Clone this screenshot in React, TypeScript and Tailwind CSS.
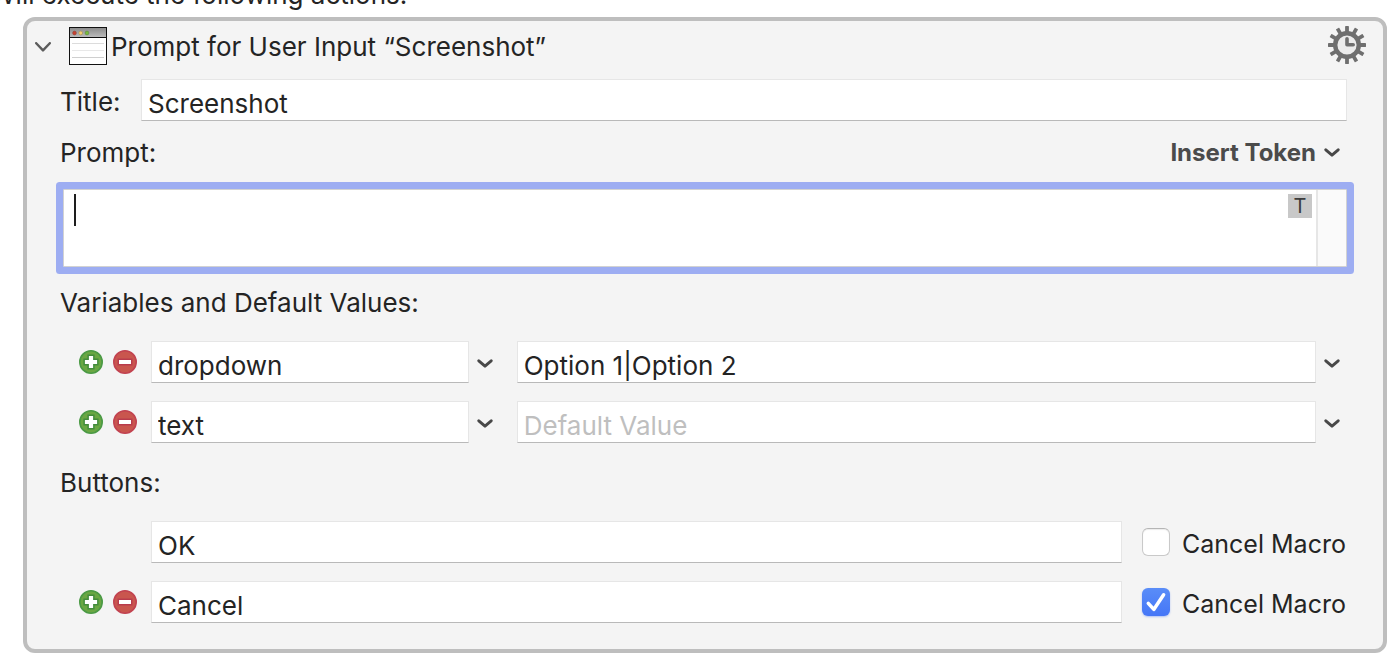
import { useState, type ReactNode } from "react";

const FIELD =
  "h-[42px] min-w-0 rounded-none border border-x-[#e6e6e6] border-t-[#e6e6e6] border-b-[#b9b9b9] bg-white px-1.5 pt-2 pb-0.5 text-[26px] leading-8 text-[#242424] outline-none placeholder:text-[#bfbfbf] placeholder:opacity-100";

function Chevron({ thin = false }: { thin?: boolean }) {
  return (
    <svg width="16" height="10" viewBox="0 0 16 10" fill="none" aria-hidden="true">
      <path
        d={thin ? "M1.2 1.2 L8 8.4 L14.8 1.2" : "M1.8 1.8 L8 7.2 L14.2 1.8"}
        stroke={thin ? "#5c5c5c" : "#484848"}
        strokeWidth={thin ? 2.4 : 2.9}
        strokeLinecap="round"
        strokeLinejoin="round"
      />
    </svg>
  );
}

function WindowIcon() {
  return (
    <svg width="38" height="38" viewBox="0 0 38 38" aria-hidden="true">
      <defs>
        <linearGradient id="titlebar" x1="0" y1="0" x2="0" y2="1">
          <stop offset="0" stopColor="#8c8c8c" />
          <stop offset="1" stopColor="#bcbcbc" />
        </linearGradient>
      </defs>
      <rect x="0.5" y="0.5" width="37" height="37" fill="#fff" stroke="#111" />
      <rect x="1" y="1" width="36" height="9" fill="url(#titlebar)" />
      <path d="M1 10.5H37" stroke="#111" />
      <circle cx="5.5" cy="6" r="1.9" fill="#c9402f" stroke="#8a4a42" strokeWidth="0.6" />
      <circle cx="11.7" cy="6" r="1.9" fill="#f3cf72" stroke="#a58d55" strokeWidth="0.6" />
      <circle cx="18" cy="6" r="1.9" fill="#78bd3b" stroke="#5c8440" strokeWidth="0.6" />
      <path d="M3 16.5H35" stroke="#dcdcdc" />
      <path d="M3 23.5H35" stroke="#e8e8e8" />
      <path d="M3 30.5H35" stroke="#cfcfcf" />
    </svg>
  );
}

const TEETH = [0, 30, 60, 90, 120, 150, 180, 210, 240, 270, 300, 330];

function GearClock() {
  return (
    <svg width="38" height="38" viewBox="0 0 38 38" aria-hidden="true">
      {TEETH.map((angle) => (
        <rect key={angle} x="17.1" y="0" width="3.8" height="8" rx="0.4" fill="#6f6f6f" transform={`rotate(${angle} 19 19)`} />
      ))}
      <circle cx="19" cy="19" r="11.8" fill="#ececec" stroke="#6f6f6f" strokeWidth="4.4" />
      <path d="M19 12.8V18.8H25.2" fill="none" stroke="#6f6f6f" strokeWidth="3.6" strokeLinecap="round" strokeLinejoin="round" />
    </svg>
  );
}

function AddRemove() {
  return (
    <div className="flex shrink-0 gap-2.5">
      <button type="button" aria-label="Add">
        <svg className="block" width="24" height="24" viewBox="0 0 24 24" aria-hidden="true">
          <circle cx="12" cy="12" r="11.2" fill="#6aa743" stroke="#4b9a45" strokeWidth="1.6" />
          <path d="M9.9 5.9h4.2v4h4v4.2h-4v4H9.9v-4h-4V9.9h4z" fill="#fff" stroke="#438d3c" strokeWidth="3" />
          <path d="M9.9 5.9h4.2v4h4v4.2h-4v4H9.9v-4h-4V9.9h4z" fill="#fff" />
        </svg>
      </button>
      <button type="button" aria-label="Remove">
        <svg className="block" width="24" height="24" viewBox="0 0 24 24" aria-hidden="true">
          <circle cx="12" cy="12" r="11.2" fill="#c9564e" stroke="#c24350" strokeWidth="1.6" />
          <rect x="6" y="10" width="12" height="4" fill="#fff" stroke="#b93c4c" strokeWidth="3" />
          <rect x="6" y="10" width="12" height="4" fill="#fff" />
        </svg>
      </button>
    </div>
  );
}

function MenuButton({ label }: { label: string }) {
  return (
    <button type="button" aria-label={label} aria-haspopup="menu" className="flex h-[42px] w-8 shrink-0 items-center justify-center pt-1">
      <Chevron />
    </button>
  );
}

function VariableRow({ name, value }: { name: string; value: string }) {
  return (
    <div className="flex items-center">
      <AddRemove />
      <input aria-label="Variable name" defaultValue={name} className={`${FIELD} ml-3.5 w-0 flex-[304]`} />
      <MenuButton label="Choose variable" />
      <input aria-label={`Default value of ${name}`} defaultValue={value} placeholder="Default Value" className={`${FIELD} ml-4 w-0 flex-[786]`} />
      <MenuButton label="Choose default value" />
    </div>
  );
}

function ButtonRow({ name, cancels, controls }: { name: string; cancels: boolean; controls?: ReactNode }) {
  const [checked, setChecked] = useState(cancels);
  return (
    <div className="flex items-center">
      <div className="w-[58px] shrink-0">{controls}</div>
      <input aria-label="Button name" defaultValue={name} className={`${FIELD} ml-3.5 flex-1`} />
      <label className="ml-5 flex w-[206px] shrink-0 items-center gap-3 whitespace-nowrap text-[25px] leading-8">
        <span className="relative block size-7 shrink-0">
          <input
            type="checkbox"
            checked={checked}
            onChange={(event) => setChecked(event.target.checked)}
            className="block size-7 appearance-none rounded-md border border-[#c9c9c9] border-t-[#b5b5b5] bg-white shadow-[inset_0_1px_1px_#00000014] checked:border-0 checked:bg-linear-to-b checked:from-[#5a8df8] checked:to-[#4576f7] checked:shadow-[0_1px_2px_#4576f766]"
          />
          {checked && (
            <svg className="pointer-events-none absolute inset-0" width="28" height="28" viewBox="0 0 28 28" fill="none" aria-hidden="true">
              <path d="M6.3 15.4 L11.8 21.4 L21.6 6.8" stroke="#fff" strokeWidth="3.5" strokeLinecap="round" strokeLinejoin="round" />
            </svg>
          )}
        </span>
        <span className="pt-1">Cancel Macro</span>
      </label>
    </div>
  );
}

export default function App() {
  return (
    <main className="min-h-screen bg-white pb-4 font-['Inter',sans-serif] text-[26px] leading-8 text-[#242424]">
      <div className="flex h-[17px] items-end overflow-hidden pb-1.5">
        <p className="-ml-2.5 shrink-0 whitespace-nowrap">Will execute the following actions:</p>
      </div>

      <section className="mr-[13px] ml-[23px] rounded-xl border-4 border-[#bebebe] bg-[#f4f4f4] pb-[26px]">
        <header className="flex items-center pt-[5px] pr-[17px] pl-2">
          <button type="button" aria-label="Collapse action" className="flex w-[34px] shrink-0 items-center pt-0.5">
            <Chevron thin />
          </button>
          <WindowIcon />
          <h1 className="min-w-0 flex-1 pt-0.5 pl-1">Prompt for User Input “Screenshot”</h1>
          <button type="button" aria-label="Action options" className="pb-0.5">
            <GearClock />
          </button>
        </header>

        <div className="pr-9 pl-[33px]">
          <div className="mt-[13px] flex items-center">
            <label htmlFor="title" className="w-[81px] shrink-0 pt-1">Title:</label>
            <input id="title" defaultValue="Screenshot" className={`${FIELD} flex-1`} />
          </div>

          <div className="mt-4 flex items-center justify-between">
            <label htmlFor="prompt">Prompt:</label>
            <button type="button" aria-haspopup="menu" className="flex items-center gap-2 pr-[7px] text-2xl leading-8 font-bold text-[#4b4b4b]">
              Insert Token
              <Chevron />
            </button>
          </div>

          <div className="relative mt-5 ml-[3px] flex h-[78px] rounded-[1px] border border-[#d2d2d2] bg-white ring-[7px] ring-[#9dadf2]">
            <textarea id="prompt" className="block min-w-0 flex-1 resize-none bg-transparent px-3 py-1 caret-transparent outline-none" />
            <span className="pointer-events-none absolute top-1 left-2.5 h-8 w-0.5 bg-[#1e1e1e]" />
            <button type="button" aria-label="Text style" className="mt-1 mr-1 flex size-6 items-center justify-center bg-[#c8c8c8] text-xl leading-6 text-[#3c3c3c]">
              T
            </button>
            <div className="w-[30px] border-l-2 border-[#e6e6e6] bg-[#fafafa]" />
          </div>
        </div>

        <div className="pl-[33px]">
          <h2 className="mt-5">Variables and Default Values:</h2>
          <div className="mt-[22px] flex flex-col gap-[18px] pr-[35px] pl-[19px]">
            <VariableRow name="dropdown" value="Option 1|Option 2" />
            <VariableRow name="text" value="" />
          </div>

          <h2 className="mt-6">Buttons:</h2>
          <div className="mt-[22px] flex flex-col gap-[18px] pr-[35px] pl-[19px]">
            <ButtonRow name="OK" cancels={false} />
            <ButtonRow name="Cancel" cancels controls={<AddRemove />} />
          </div>
        </div>
      </section>
    </main>
  );
}
